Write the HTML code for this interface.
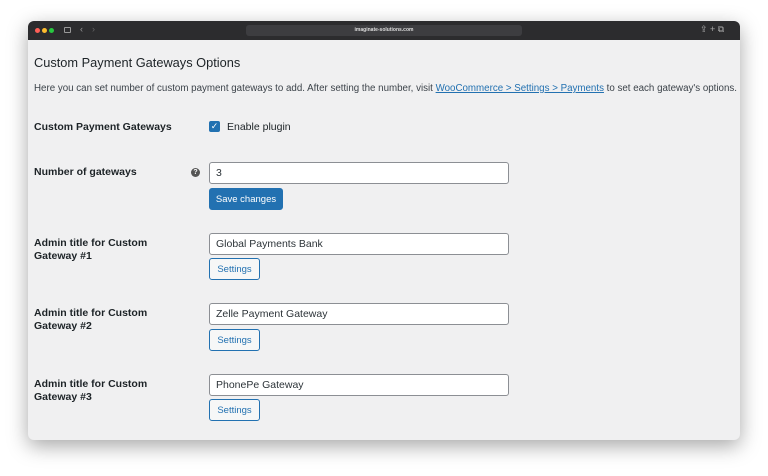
<!DOCTYPE html>
<html><head><style>
body{margin:0;width:768px;height:476px;background:#fff;font-family:"Liberation Sans",sans-serif;position:relative;overflow:hidden}
.win{position:absolute;left:28px;top:21px;width:712px;height:419px;border-radius:6px;overflow:hidden;background:#f0f0f1;box-shadow:0 6px 20px rgba(0,0,0,.35)}
.bar{position:absolute;left:0;top:0;width:712px;height:19px;background:#2c2c2e}
.dot{position:absolute;top:7px;width:5px;height:5px;border-radius:50%}
.url{position:absolute;left:218px;top:4px;width:276px;height:11px;background:#3d3d40;border-radius:3px;color:#ddd;font-size:5px;text-align:center;line-height:11px;font-weight:bold}
.a{position:absolute;color:#1d2327;font-size:10px}
.lbl{font-weight:bold;font-size:10.5px;line-height:13px;color:#1d2327}
.in{position:absolute;left:181px;width:300px;height:22px;border:1px solid #8c8f94;border-radius:3px;background:#fff;box-sizing:border-box;font-size:10.5px;padding-left:6px;line-height:20px;color:#2c3338}
.btn{position:absolute;left:181px;height:22px;border-radius:3px;box-sizing:border-box;font-size:9.5px;line-height:21px;text-align:center}
.s{width:51px;border:1px solid #2271b1;color:#2271b1;background:#f6f7f7}
</style></head><body>
<div class="win">
<div class="bar">
<div class="dot" style="left:7px;background:#ff5f57"></div>
<div class="dot" style="left:14px;background:#febc2e"></div>
<div class="dot" style="left:21px;background:#28c840"></div>
<div style="position:absolute;left:36px;top:6px;width:7px;height:6px;border:1px solid #999;border-radius:1px;box-sizing:border-box"></div>
<div style="position:absolute;left:52px;top:3px;color:#999;font-size:9px">‹</div>
<div style="position:absolute;left:64px;top:3px;color:#666;font-size:9px">›</div>
<div class="url">imaginate-solutions.com</div>
<div style="position:absolute;left:672px;top:3px;color:#aaa;font-size:9px">⇪ + ⧉</div>
</div>
<div class="a" style="left:6px;top:34px;font-size:12.8px;color:#1d2327">Custom Payment Gateways Options</div>
<div class="a" style="left:6px;top:62px;font-size:9.75px;color:#3c434a;white-space:nowrap">Here you can set number of custom payment gateways to add. After setting the number, visit <span style="color:#2271b1;text-decoration:underline">WooCommerce &gt; Settings &gt; Payments</span> to set each gateway's options.</div>
<div class="a lbl" style="left:6px;top:100px">Custom Payment Gateways</div>
<div style="position:absolute;left:181px;top:100px;width:11px;height:11px;background:#2271b1;border-radius:2px;color:#fff;font-size:9px;line-height:11px;text-align:center">✓</div>
<div class="a" style="left:199px;top:100px;font-size:10.5px">Enable plugin</div>
<div class="a lbl" style="left:6px;top:145px">Number of gateways</div>
<div style="position:absolute;left:163px;top:147px;width:9px;height:9px;border-radius:50%;background:#555;color:#fff;font-size:7px;line-height:9px;text-align:center;font-weight:bold">?</div>
<div class="in" style="top:141px">3</div>
<div class="btn" style="top:167px;width:74px;background:#2271b1;color:#fff;border:1px solid #2271b1">Save changes</div>
<div class="a lbl" style="left:6px;top:216px">Admin title for Custom<br>Gateway #1</div>
<div class="in" style="top:212px">Global Payments Bank</div>
<div class="btn s" style="top:237px">Settings</div>
<div class="a lbl" style="left:6px;top:286px">Admin title for Custom<br>Gateway #2</div>
<div class="in" style="top:282px">Zelle Payment Gateway</div>
<div class="btn s" style="top:308px">Settings</div>
<div class="a lbl" style="left:6px;top:357px">Admin title for Custom<br>Gateway #3</div>
<div class="in" style="top:353px">PhonePe Gateway</div>
<div class="btn s" style="top:378px">Settings</div>
</div>
</body></html>
